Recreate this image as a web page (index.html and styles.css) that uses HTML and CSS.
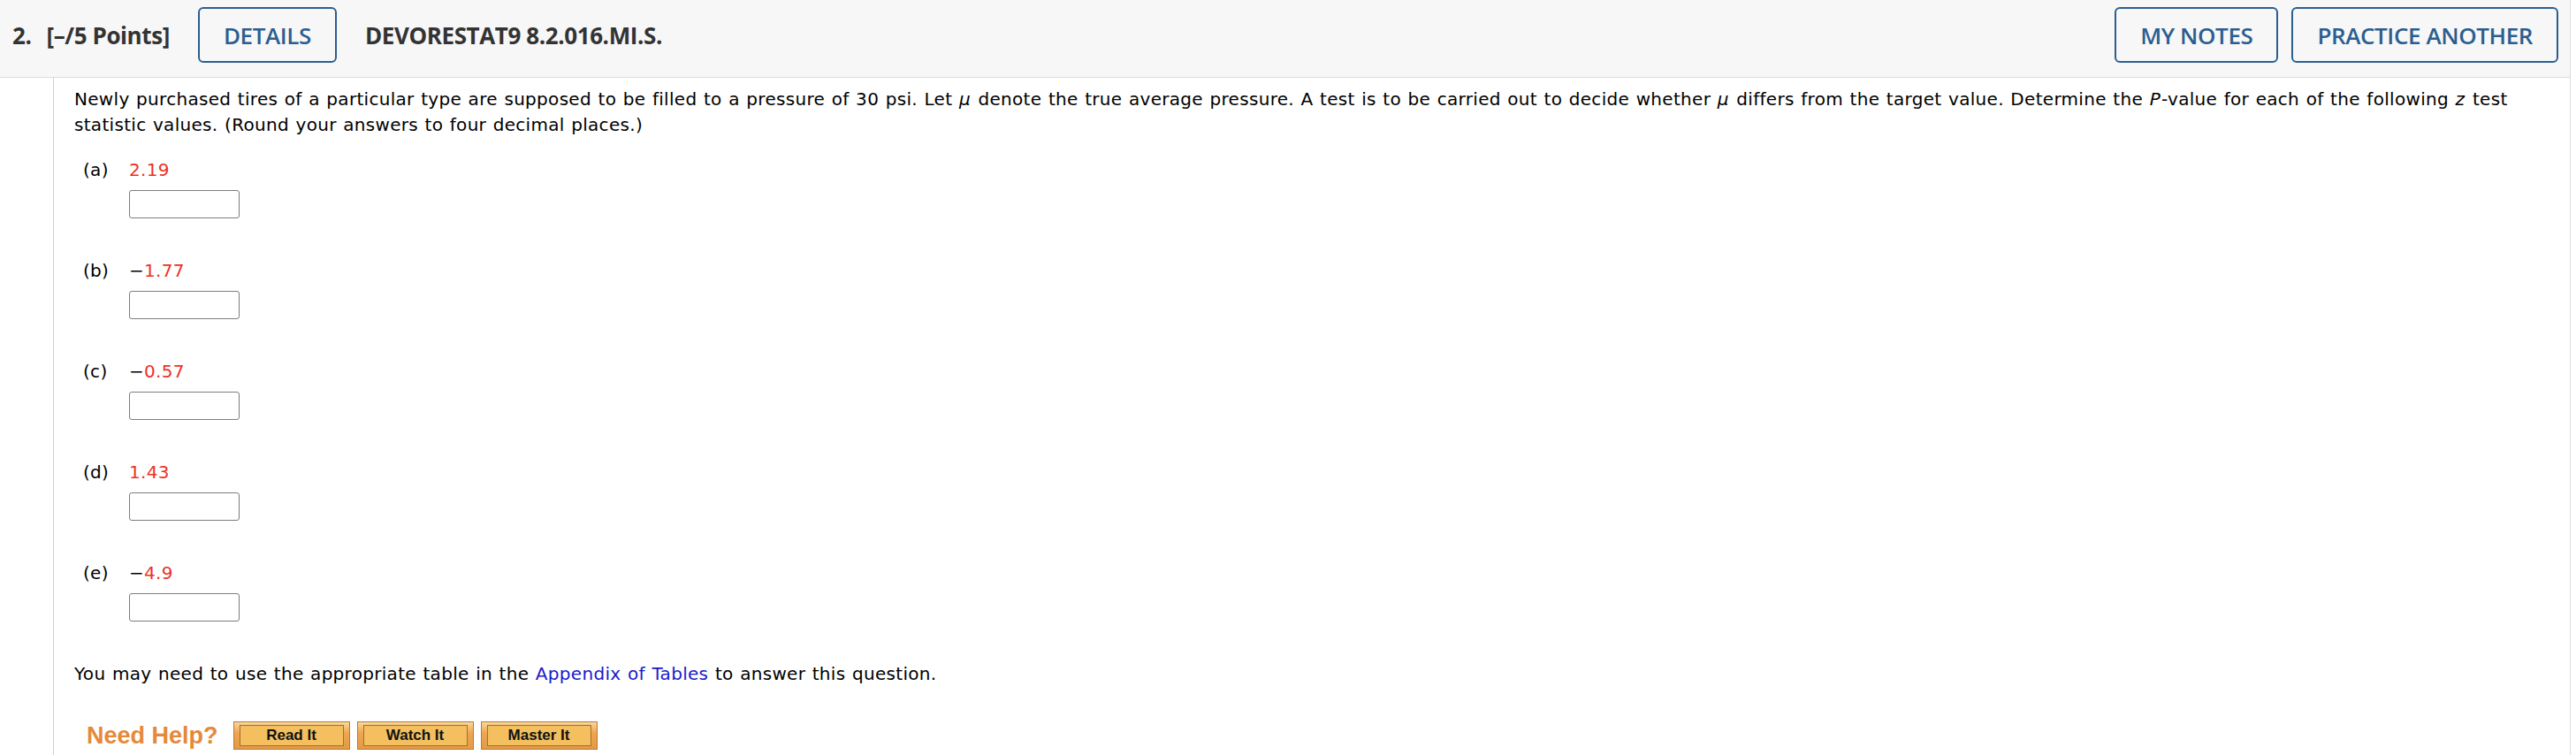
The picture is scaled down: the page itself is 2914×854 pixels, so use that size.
FILE: index.html
```html
<!DOCTYPE html>
<html lang="en">
<head>
<meta charset="utf-8">
<title>Question 2</title>
<link rel="stylesheet" href="styles.css">
</head>
<body>
<div class="question">
  <div class="qhead">
    <div class="qhead-left">
      <span class="qnum">2.</span><span class="qpts">[–/5 Points]</span>
      <button class="hbtn details">DETAILS</button>
      <span class="qid">DEVORESTAT9 8.2.016.MI.S.</span>
    </div>
    <div class="qhead-right">
      <button class="hbtn">MY NOTES</button>
      <button class="hbtn">PRACTICE ANOTHER</button>
    </div>
  </div>
  <div class="qbody">
    <p class="stem"><span>Newly purchased tires of a particular type are supposed to be filled to a pressure of 30 psi. Let</span> <i class="var">μ</i> <span>denote the true average pressure. A test is to be carried out to decide whether</span> <i class="var">μ</i> <span>differs from the target value. Determine the</span> <i class="var">P</i><span>-value for each of the following</span> <i class="var">z</i> <span>test</span> <span>statistic values. (Round your answers to four decimal places.)</span></p>
    <div class="parts">
      <div class="part">
        <span class="plabel">(a)</span>
        <div class="pcontent"><div class="pval"><span class="red">2.19</span></div><input type="text" class="ans"></div>
      </div>
      <div class="part">
        <span class="plabel">(b)</span>
        <div class="pcontent"><div class="pval">−<span class="red">1.77</span></div><input type="text" class="ans"></div>
      </div>
      <div class="part">
        <span class="plabel">(c)</span>
        <div class="pcontent"><div class="pval">−<span class="red">0.57</span></div><input type="text" class="ans"></div>
      </div>
      <div class="part">
        <span class="plabel">(d)</span>
        <div class="pcontent"><div class="pval"><span class="red">1.43</span></div><input type="text" class="ans"></div>
      </div>
      <div class="part">
        <span class="plabel">(e)</span>
        <div class="pcontent"><div class="pval">−<span class="red">4.9</span></div><input type="text" class="ans"></div>
      </div>
    </div>
    <p class="note">You may need to use the appropriate table in the <a href="#" class="link">Appendix of Tables</a> to answer this question.</p>
    <div class="help">
      <span class="help-title">Need Help?</span>
      <button class="hb"><span class="hb-in">Read It</span></button>
      <button class="hb"><span class="hb-in">Watch It</span></button>
      <button class="hb"><span class="hb-in">Master It</span></button>
    </div>
  </div>
</div>
</body>
</html>
```

FILE: styles.css
```css
html, body {
  margin: 0;
  padding: 0;
  background: #ffffff;
}

.question {
  width: 2908px;
  box-sizing: border-box;
}

.qhead {
  display: flex;
  justify-content: space-between;
  align-items: center;
  height: 88px;
  box-sizing: border-box;
  padding: 8px 13px 16px 14px;
  background: #f7f7f7;
  border-bottom: 1px solid #dcdcdc;
  border-right: 1px solid #dcdcdc;
  font-family: "Open Sans", "Liberation Sans", sans-serif;
}

.qhead-left,
.qhead-right {
  display: flex;
  align-items: center;
}

.qhead-right {
  gap: 15px;
}

.qnum,
.qpts,
.qid {
  font-size: 26px;
  font-weight: 700;
  color: #333333;
  letter-spacing: -0.4px;
}

.qnum {
  margin-right: 17px;
}

.hbtn {
  height: 63px;
  box-sizing: border-box;
  padding: 0 27px;
  border: 2px solid #2b5e91;
  border-radius: 6px;
  background: #f7f7f7;
  color: #2b5e91;
  font-family: "Open Sans", "Liberation Sans", sans-serif;
  font-size: 26px;
  font-weight: 600;
  letter-spacing: -0.4px;
}

.details {
  margin: 0 32px;
}

.qbody {
  margin-left: 60px;
  border-left: 1px solid #d0d0d0;
  border-right: 1px solid #dcdcdc;
  padding: 10px 24px 0 23px;
  height: 766px;
  box-sizing: border-box;
  font-family: "DejaVu Sans", Verdana, sans-serif;
  font-size: 20px;
  line-height: 29px;
  letter-spacing: 0.3px;
  word-spacing: 0.9px;
  color: #000000;
}

.stem {
  margin: 0;
}

.var {
  padding-right: 1px;
}

.parts {
  margin-top: 22px;
  padding-left: 10px;
}

.part {
  display: flex;
  margin-bottom: 45px;
}

.plabel {
  width: 52px;
  flex: none;
}

.pcontent {
  display: flex;
  flex-direction: column;
  align-items: flex-start;
}

.red {
  color: #ee3124;
}

.ans {
  margin-top: 8px;
  width: 125px;
  height: 32px;
  box-sizing: border-box;
  border: 1px solid #7d7d7d;
  border-radius: 3px;
  background: #ffffff;
  padding: 0;
}

.note {
  margin: 0;
}

.link {
  color: #1a1acc;
  text-decoration: none;
}

.help {
  display: flex;
  align-items: center;
  margin-top: 39px;
  padding-left: 14px;
  letter-spacing: 0;
  word-spacing: 0;
}

.help-title {
  font-family: "Liberation Sans", Arial, sans-serif;
  font-size: 27px;
  font-weight: 700;
  color: #e5893a;
  margin-right: 17px;
  line-height: 32px;
}

.hb {
  display: flex;
  width: 132px;
  height: 32px;
  box-sizing: border-box;
  margin-right: 8px;
  padding: 3px 6px;
  border: 1px solid #b8783a;
  background: linear-gradient(#f9d79a, #eda650 40%, #e59a45);
  cursor: pointer;
}

.hb-in {
  flex: 1;
  display: flex;
  align-items: center;
  justify-content: center;
  border: 1px solid #a86d2f;
  background: #f3bf5f;
  font-family: "Liberation Sans", Arial, sans-serif;
  font-size: 17px;
  font-weight: 700;
  color: #111111;
}
```
